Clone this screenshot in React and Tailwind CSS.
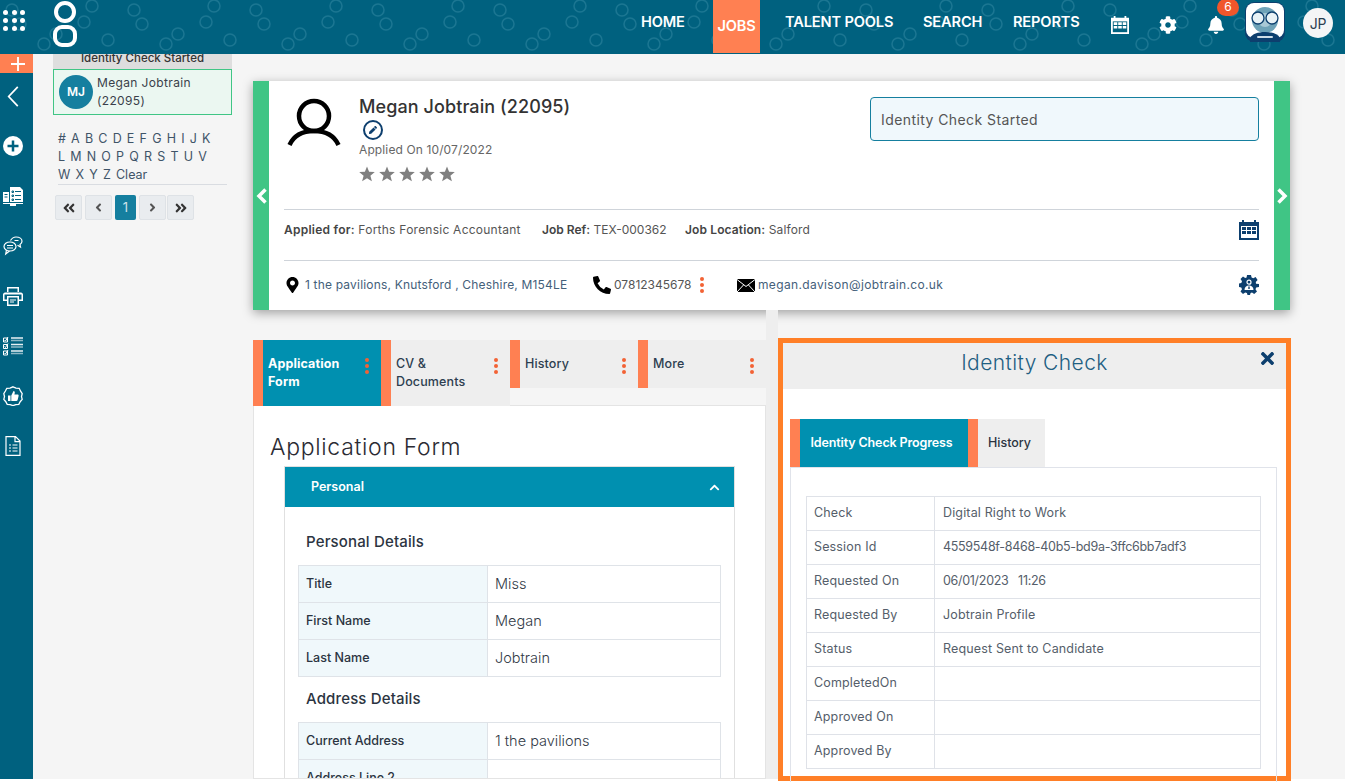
import React from "react";
import {
    FaBell,
    FaCog,
    FaTimes,
    FaChevronUp,
    FaMapMarkerAlt,
    FaPhoneAlt,
    FaPen,
    FaAngleDoubleLeft,
    FaAngleDoubleRight,
    FaAngleLeft,
    FaAngleRight,
} from "react-icons/fa";

const RingPattern = () => (
    <svg className="absolute inset-0 h-full w-full" aria-hidden="true">
        <defs>
            <pattern id="rings" width="122" height="54" patternUnits="userSpaceOnUse">
                <g fill="none" stroke="#1b7692" strokeWidth="1.5">
                    <circle cx="12" cy="10" r="6" />
                    <circle cx="20" cy="24" r="6" />
                    <circle cx="44" cy="44" r="6" />
                    <circle cx="56" cy="34" r="6" />
                    <circle cx="84" cy="22" r="6" />
                    <circle cx="92" cy="6" r="6" />
                    <circle cx="108" cy="40" r="6" />
                </g>
            </pattern>
        </defs>
        <rect width="100%" height="100%" fill="url(#rings)" />
    </svg>
);

const CalendarIcon = ({ className }) => (
    <svg viewBox="0 0 20 20" className={className} fill="currentColor">
        <path d="M0 2h3V0h2v2h10V0h2v2h3v18H0z" />
        <g fill="var(--cal-bg)">
            <path d="M2 6h16v12H2z" />
        </g>
        <path d="M3 7h4v3H3zM8 7h4v3H8zM13 7h4v3h-4zM3 11h4v3H3zM8 11h4v3H8zM13 11h4v3h-4z" />
    </svg>
);

const GearUserIcon = () => (
    <svg viewBox="0 0 20 20" className="h-[20px] w-[20px]">
        <path
            fill="#0d3f6e"
            d="M8 0h4l.6 2.6 1.7.7L16.600 2l2 3-1.800 2 .2 1.800L20 9v3l-2.800.6-.7 1.700L18 16.600l-2.800 2.400-2.200-1.600-1.400.6L11 20H8.500l-.6-2-1.700-.6L4 19l-2.500-2.400 1.500-2.300-.7-1.700L0 12V8.500l2.300-.6.7-1.700L1.500 4 4 1.600l2.200 1.500 1.400-.6z"
        />
        <circle cx="10" cy="7.200" r="2" fill="none" stroke="#fff" strokeWidth="1.200" />
        <path fill="#fff" d="M5.500 15c0-3 1.800-4.500 4.500-4.500s4.500 1.500 4.500 4.500z" />
        <path fill="#0d3f6e" d="M9.300 11.500h1.400v2.500H9.300z" />
    </svg>
);

const StarIcon = () => (
    <svg viewBox="0 0 16 16" className="h-[16px] w-[16px]" fill="#808080">
        <path d="M8 .5l2.100 5.300 5.700.3-4.400 3.600 1.500 5.600L8 12.200l-4.900 3.100 1.500-5.600L.2 6.100l5.700-.3z" />
    </svg>
);

const VerticalDots = () => (
    <span className="flex flex-col gap-[2px]">
        <span className="h-[4px] w-[4px] rounded-full bg-[#f26235]" />
        <span className="h-[4px] w-[4px] rounded-full bg-[#f26235]" />
        <span className="h-[4px] w-[4px] rounded-full bg-[#f26235]" />
    </span>
);

const sideIcons = [
    <svg key="monitor" viewBox="0 0 20 20" className="h-[20px] w-[20px]" fill="none" stroke="#fff" strokeWidth="1">
        <path fill="#fff" stroke="none" d="M0 6h6v10H0zM7 1h10l3 3v12H7z" />
        <path stroke="#00617f" d="M9 5h1.500v1.500H9zM12 5.500h6M9 9h1.500v1.500H9zM12 9.500h6M9 13h1.500v1.500H9zM12 13.500h6M1.500 8.500h3M1.500 11h3" />
        <path fill="#fff" stroke="none" d="M0 17h20v1H0zM7 18h6v2H7z" />
    </svg>,
    <svg key="chat" viewBox="0 0 20 20" className="h-[20px] w-[20px]" fill="none" stroke="#fff" strokeWidth="1.200">
        <path d="M13 1c3.500 0 6 1.800 6 4.200 0 1.400-.8 2.500-2 3.300l.5 2.500-3-1.800" />
        <path d="M7.500 4.500C9 2 11 1 13 1M11.500 4.500h4" />
        <ellipse cx="7" cy="10.500" rx="6" ry="4.500" />
        <path d="M3.500 14l-.8 4 3.800-3M4 9.500h6M4 12h6" />
    </svg>,
    <svg key="print" viewBox="0 0 20 20" className="h-[20px] w-[20px]" fill="#fff">
        <path d="M4 1h12v5h-1.500V2.500h-9V6H4z" />
        <path d="M2 6.500h16c1 0 2 1 2 2V15h-4v-1.500h2.500v-5h-17v5H4V15H0V8.500c0-1 1-2 2-2z" />
        <path d="M4 10h12v10H4zM5.500 11.500v7h9v-7z" fillRule="evenodd" />
        <path d="M7 13.500h6v1H7zM7 15.500h4v1H7z" />
    </svg>,
    <svg key="list" viewBox="0 0 20 20" className="h-[20px] w-[20px]" fill="none" stroke="#fff" strokeWidth="1">
        <path d="M.5 2h4v4h-4zM.5 8.500h4v4h-4zM.5 15h4v4h-4z" />
        <path strokeOpacity=".9" d="M8 2h12M8 8.500h12M8 15h12" strokeWidth="1.300" />
        <path strokeOpacity=".55" d="M8 4.500h12M8 11h12M8 17.500h12" strokeWidth="1.300" />
        <path d="M1.500 4l1 1 2.500-4M1.500 10.500l1 1 2.500-4M1.500 17l1 1 2.500-4" />
    </svg>,
    <svg key="thumb" viewBox="0 0 20 20" className="h-[20px] w-[20px]">
        <path
            fill="none"
            stroke="#fff"
            strokeWidth="1.300"
            d="M10 .8l3 1.300 3.200.2 1.400 2.900 1.600 2.500-.7 2.900.7 2.800-2 2.300-1.400 2.600-3 .3-2.800 1.100-2.800-1.100-3-.3-1.400-2.600-2-2.300.7-2.800-.7-2.900L2.400 5l1.400-2.700L7 2.100z"
        />
        <path fill="#fff" d="M5 9.500h2.500v5.500H5zM8.300 9.500L10.500 5c1.200 0 1.500 1 1.200 2.200l-.3 1.300h3.200c.8 0 1.200.6 1 1.400l-1 4c-.2.700-.6 1.100-1.300 1.100H8.300z" />
    </svg>,
    <svg key="doc" viewBox="0 0 20 20" className="h-[20px] w-[20px]" fill="none" stroke="#fff" strokeWidth="1.200">
        <path d="M3 .6h9.500L17 5v14.400H3zM12 .6v5h5" />
        <path strokeWidth="1.100" d="M6 9h2M9.500 9H14.500M6 12h2M9.500 12H14.500M6 15h2M9.500 15H14.500" />
    </svg>,
];

const letterRows = [
    ["#", "A", "B", "C", "D", "E", "F", "G", "H", "I", "J", "K"],
    ["L", "M", "N", "O", "P", "Q", "R", "S", "T", "U", "V"],
    ["W", "X", "Y", "Z", "Clear"],
];

const pageBtn =
    "flex h-[25px] items-center justify-center rounded-[2px] border border-[#dee2e6] bg-[#e9ecef]";

const FormTable = ({ rows }) => (
    <table className="w-[423px] table-fixed border-collapse">
        <tbody>
            {rows.map(([label, value]) => (
                <tr key={label} className="h-[37px]">
                    <td className="w-[189px] border border-[#dfe3e8] bg-[#f0f8fb] pl-[7px] text-[12.5px] font-medium text-[#2b3441]">
                        {label}
                    </td>
                    <td className="border border-[#dfe3e8] pl-[7px] text-[14.5px] font-light text-[#333b47]">
                        {value}
                    </td>
                </tr>
            ))}
        </tbody>
    </table>
);

const Tab = ({ label, active, tall, width = "w-[128px]" }) => (
    <div className={`flex ${width} border-l-[10px] border-[#ff8052] ${tall ? "h-[66px]" : "h-[48px]"} ${active ? "bg-[#0090b0] text-white font-bold" : "bg-[#eeeeee] text-[#2d3e50] font-medium"}`}>
        <div className="flex-1 pl-[5px] pt-[15px] text-[12.5px] leading-[18px] tracking-[0.01em]">{label}</div>
        <div className="pr-[12px] pt-[18px]">
            <VerticalDots />
        </div>
    </div>
);

const checkRows = [
    ["Check", "Digital Right to Work"],
    ["Session Id", "4559548f-8468-40b5-bd9a-3ffc6bb7adf3"],
    ["Requested On", "06/01/2023\u00a0\u00a0\u00a011:26"],
    ["Requested By", "Jobtrain Profile"],
    ["Status", "Request Sent to Candidate"],
    ["CompletedOn", ""],
    ["Approved On", ""],
    ["Approved By", ""],
];

export default function App() {
    return (
        <div className="h-[782px] w-[1345px] overflow-hidden bg-white font-['Inter',sans-serif] text-[#333]">
            {/* Top bar */}
            <header className="relative flex h-[54px] items-start bg-[#00617f] text-white">
                <RingPattern />
                <div className="relative grid w-[53px] shrink-0 grid-cols-3 content-start gap-x-[3px] gap-y-[3px] pl-[3px] pt-[10px] pr-[27px]">
                    {Array.from({ length: 9 }).map((_, i) => (
                        <span key={i} className="h-[5px] w-[5px] rounded-full bg-white" />
                    ))}
                </div>
                <svg viewBox="0 0 24 46" className="relative mt-[1px] h-[46px] w-[24px]" fill="none" stroke="#fff" strokeWidth="4">
                    <circle cx="12" cy="11" r="9" />
                    <rect x="2" y="26" width="20" height="18" rx="7" />
                </svg>
                <nav className="relative ml-[564px] flex h-[53px] items-center text-[14.6px] font-semibold tracking-[-0.01em]">
                    <span className="w-[72px] pb-[7px]">HOME</span>
                    <span className="flex h-[53px] w-[47px] items-center justify-center bg-[#ff8052]">JOBS</span>
                    <span className="ml-[25px] w-[138px] pb-[7px]">TALENT POOLS</span>
                    <span className="w-[90px] pb-[7px]">SEARCH</span>
                    <span className="w-[98px] pb-[7px]">REPORTS</span>
                    <span className="w-[48px] pb-[4px] [--cal-bg:#00617f]">
                        <CalendarIcon className="h-[18px] w-[18px]" />
                    </span>
                    <span className="w-[48px] pb-[4px]">
                        <FaCog className="h-[18px] w-[18px]" />
                    </span>
                    <span className="relative w-[38px] pb-[4px]">
                        <FaBell className="h-[18px] w-[18px]" />
                        <span className="absolute left-[10px] top-[-17px] flex h-[17px] w-[22px] items-center justify-center rounded-full bg-[#f0562b] text-[12px] font-normal">
                            6
                        </span>
                    </span>
                    <svg viewBox="0 0 40 40" className="mb-[10px] h-[40px] w-[40px]">
                        <rect x="0" y="0" width="40" height="40" rx="9" fill="#0d3f6e" />
                        <rect x="1" y="1" width="38" height="35" rx="8" fill="#fff" />
                        <circle cx="20" cy="18" r="13" fill="#6fa3b8" />
                        <circle cx="20" cy="18" r="7" fill="#a9c9d6" />
                        <circle cx="13" cy="16" r="6" fill="#e8f2f6" stroke="#0d3f6e" strokeWidth="1.300" />
                        <circle cx="27" cy="16" r="6" fill="#e8f2f6" stroke="#0d3f6e" strokeWidth="1.300" />
                        <path d="M5 36c2-4 8-6 15-6s13 2 15 6v4H5z" fill="#0d3f6e" />
                        <rect x="12" y="34" width="16" height="2" rx="1" fill="#cfdde6" />
                    </svg>
                    <span className="ml-[18px] mb-[7px] flex h-[30px] w-[30px] items-center justify-center rounded-full bg-[#f4f5f6] text-[14px] font-normal text-[#2d3e50]">
                        JP
                    </span>
                </nav>
            </header>

            <div className="flex h-[725px] bg-[#f5f5f5]">
                {/* Sidebar */}
                <aside className="flex w-[33px] shrink-0 flex-col bg-[#00617f] text-white">
                    <div className="flex h-[19px] items-center justify-center bg-[#ff8052] pl-[3px]">
                        <svg viewBox="0 0 15 15" className="h-[14px] w-[14px]" stroke="#fff" strokeWidth="2">
                            <path d="M7.500 0v15M0 7.500h15" />
                        </svg>
                    </div>
                    <div className="flex flex-col items-start pl-[3px]">
                        <div className="flex h-[47px] w-[20px] items-center justify-center">
                            <svg viewBox="0 0 12 22" className="h-[21px] w-[12px]" fill="none" stroke="#fff" strokeWidth="1.800">
                                <path d="M11 1L1.500 11 11 21" />
                            </svg>
                        </div>
                        <div className="flex h-[51px] w-[20px] items-center justify-center">
                            <svg viewBox="0 0 20 20" className="h-[20px] w-[20px]">
                                <circle cx="10" cy="10" r="10" fill="#fff" />
                                <path d="M10 4.500v11M4.500 10h11" stroke="#00617f" strokeWidth="2.500" />
                            </svg>
                        </div>
                        {sideIcons.map((icon) => (
                            <div key={icon.key} className="flex h-[50px] w-[20px] items-center justify-center">
                                {icon}
                            </div>
                        ))}
                    </div>
                </aside>

                {/* Candidate list */}
                <section className="ml-[20px] w-[179px] shrink-0">
                    <div className="h-[15px] bg-[#dedede] text-center text-[11.5px] font-medium leading-[8px] text-[#333]">
                        Identity Check Started
                    </div>
                    <div className="flex h-[46px] items-center gap-[4px] border border-[#40c585] bg-[#ebf7f1] pl-[5px]">
                        <span className="flex h-[34px] w-[34px] shrink-0 items-center justify-center rounded-full bg-[#157f9f] text-[12px] font-semibold text-white">
                            MJ
                        </span>
                        <span className="text-[12px] leading-[18px] tracking-[0.03em] text-[#3a3f4a]">
                            Megan Jobtrain (22095)
                        </span>
                    </div>
                    <div className="ml-[5px] mt-[15px] w-[169px] border-b border-[#d9dce1] text-[12.5px] leading-[18px] text-[#3f5468]">
                        {letterRows.map((row) => (
                            <div key={row[0]} className="flex gap-[5.2px]">
                                {row.map((l) => (
                                    <span key={l}>{l}</span>
                                ))}
                            </div>
                        ))}
                    </div>
                    <div className="ml-[2px] mt-[10px] flex gap-[3px] text-[#333]">
                        <span className={`${pageBtn} w-[27px]`}>
                            <FaAngleDoubleLeft className="h-[14px] w-[14px]" />
                        </span>
                        <span className={`${pageBtn} w-[27px]`}>
                            <FaAngleLeft className="h-[13px] w-[13px] text-[#555]" />
                        </span>
                        <span className="flex h-[25px] w-[21px] items-center justify-center rounded-[2px] bg-[#157f9f] text-[13px] text-[#cfe3ea]">
                            1
                        </span>
                        <span className={`${pageBtn} w-[27px]`}>
                            <FaAngleRight className="h-[13px] w-[13px] text-[#555]" />
                        </span>
                        <span className={`${pageBtn} -ml-[2px] w-[27px]`}>
                            <FaAngleDoubleRight className="h-[14px] w-[14px]" />
                        </span>
                    </div>
                </section>

                {/* Main */}
                <main className="ml-[21px] flex w-[1038px] shrink-0 flex-col">
                    <div className="mt-[27px] flex h-[229px] w-[1037px] shrink-0 bg-white shadow-[0_3px_10px_rgba(0,0,0,0.35)]">
                        <div className="flex w-[16px] items-center justify-center bg-[#40c585]">
                            <svg viewBox="0 0 11 16" className="h-[16px] w-[11px]" fill="none" stroke="#fff" strokeWidth="3.500">
                                <path d="M9.500 1.500L3 8l6.500 6.500" />
                            </svg>
                        </div>
                        <div className="flex flex-1 flex-col pl-[15px] pr-[15px] pt-[16px]">
                            <div className="flex h-[112px] justify-between">
                                <div className="flex">
                                    <svg viewBox="0 0 54 50" className="ml-[3px] h-[50px] w-[54px]" fill="none" stroke="#000" strokeWidth="4.500">
                                        <circle cx="27" cy="19" r="15" />
                                        <path d="M2.500 48C7 38 15 34 27 34s20 4 24.500 14" />
                                    </svg>
                                    <div className="ml-[18px]">
                                        <div className="text-[18px] font-medium leading-[20px] tracking-[0.005em] text-[#333]">
                                            Megan Jobtrain (22095)
                                        </div>
                                        <span className="ml-[4px] mt-[3px] flex h-[20px] w-[20px] items-center justify-center rounded-full border-2 border-[#0d3f6e] text-[#0d3f6e]">
                                            <FaPen className="h-[8px] w-[8px]" />
                                        </span>
                                        <div className="mt-[2px] text-[12px] leading-[16px] tracking-[0.01em] text-[#666]">
                                            Applied On 10/07/2022
                                        </div>
                                        <div className="mt-[8px] flex gap-[4px]">
                                            {[1, 2, 3, 4, 5].map((n) => (
                                                <StarIcon key={n} />
                                            ))}
                                        </div>
                                    </div>
                                </div>
                                <div className="flex h-[44px] w-[389px] items-center rounded-[4px] border border-[#157f9f] bg-[#f0f8fc] pl-[10px] text-[14px] tracking-[0.03em] text-[#555]">
                                    Identity Check Started
                                </div>
                            </div>
                            <div className="flex h-[51px] items-center border-t border-[#cfd4da] pb-[10px] text-[12px] text-[#555]">
                                <span className="w-[258px] tracking-[0.02em]">
                                    <b className="font-semibold text-[#444]">Applied for:</b> Forths Forensic Accountant
                                </span>
                                <span className="w-[143px]">
                                    <b className="font-semibold text-[#444]">Job Ref:</b> TEX-000362
                                </span>
                                <span className="tracking-[0.01em]">
                                    <b className="font-semibold text-[#444]">Job Location:</b> Salford
                                </span>
                                <span className="ml-auto text-[#0d3f6e] [--cal-bg:#fff]">
                                    <CalendarIcon className="h-[20px] w-[20px]" />
                                </span>
                            </div>
                            <div className="flex h-[49px] items-center border-t border-[#cfd4da] text-[12px] text-[#44607a]">
                                <FaMapMarkerAlt className="ml-[2px] h-[16px] w-[13px] text-black" />
                                <span className="ml-[6px] w-[288px] tracking-[0.015em]">1 the pavilions, Knutsford , Cheshire, M154LE</span>
                                <FaPhoneAlt className="h-[18px] w-[18px] text-black" />
                                <span className="ml-[3px] w-[86px] text-[#555]">07812345678</span>
                                <VerticalDots />
                                <svg viewBox="0 0 18 13" className="ml-[33px] h-[13px] w-[18px]">
                                    <rect width="18" height="13" fill="#000" />
                                    <path d="M0 .5l9 7 9-7M0 13l6.500-7M18 13l-6.500-7" fill="none" stroke="#fff" strokeWidth="1" />
                                </svg>
                                <span className="ml-[3px] tracking-[0.03em]">megan.davison@jobtrain.co.uk</span>
                                <span className="ml-auto">
                                    <GearUserIcon />
                                </span>
                            </div>
                        </div>
                        <div className="flex w-[16px] items-center justify-center bg-[#40c585]">
                            <svg viewBox="0 0 11 16" className="h-[16px] w-[11px]" fill="none" stroke="#fff" strokeWidth="3.500">
                                <path d="M1.500 1.500L8 8l-6.500 6.500" />
                            </svg>
                        </div>
                    </div>

                    <div className="flex min-h-0 flex-1">
                        {/* Application form */}
                        <div className="mt-[30px] flex w-[513px] shrink-0 flex-col overflow-hidden">
                            <div className="relative z-10 flex h-[65px] shrink-0 items-start">
                                <Tab active tall label="Application Form" />
                                <Tab tall width="w-[129px]" label="CV & Documents" />
                                <Tab label="History" />
                                <Tab label="More" />
                            </div>
                            <div className="min-h-0 flex-1 overflow-hidden border border-[#e4e4e4] bg-white">
                                <h2 className="pl-[16px] pt-[26px] text-[23px] font-light leading-[30px] tracking-[0.03em] text-[#2b2b33]">
                                    Application Form
                                </h2>
                                <div className="ml-[30px] mt-[4px] h-[400px] w-[451px] border border-[#e0e0e0]">
                                    <div className="flex h-[40px] items-center justify-between bg-[#0090b0] pl-[26px] pr-[14px] pt-[1px] text-[12.5px] font-semibold text-white">
                                        Personal
                                        <FaChevronUp className="h-[11px] w-[11px]" />
                                    </div>
                                    <div className="pl-[13px]">
                                        <h3 className="pl-[8px] pt-[25px] pb-[13px] text-[15px] font-medium leading-[20px] tracking-[0.01em] text-[#2b3441]">
                                            Personal Details
                                        </h3>
                                        <FormTable rows={[["Title", "Miss"], ["First Name", "Megan"], ["Last Name", "Jobtrain"]]} />
                                        <h3 className="pl-[8px] pt-[12px] pb-[13px] text-[15px] font-medium leading-[20px] tracking-[0.01em] text-[#2b3441]">
                                            Address Details
                                        </h3>
                                        <FormTable rows={[["Current Address", "1 the pavilions"], ["Address Line 2", ""]]} />
                                    </div>
                                </div>
                            </div>
                        </div>

                        <div className="h-[469px] w-[12px] shrink-0 bg-[#eeeeee]" />

                        {/* Identity check panel */}
                        <div className="mt-[28px] h-[443px] w-[513px] shrink-0 border-[5px] border-[#ff7f27] bg-white">
                            <div className="relative flex h-[46px] items-center justify-center bg-[#eeeeee] pb-[7px] text-[21px] font-light tracking-[0.02em] text-[#1f5f82]">
                                Identity Check
                                <FaTimes className="absolute right-[10px] top-[6px] h-[19px] w-[17px] text-[#0d3f6e]" />
                            </div>
                            <div className="pl-[7px] pt-[30px]">
                                <div className="flex h-[48px] text-[12.5px] leading-[48px]">
                                    <div className="h-[48px] w-[178px] border-l-[10px] border-[#ff8052] bg-[#0090b0] pr-[5px] text-center font-semibold tracking-[-0.01em] text-white">
                                        Identity Check Progress
                                    </div>
                                    <div className="h-[48px] w-[77px] border-l-[10px] border-[#ff8052] bg-[#eeeeee] pr-[4px] text-center font-medium text-[#2b3441]">
                                        History
                                    </div>
                                </div>
                                <div className="h-[320px] w-[487px] border border-[#e0e3ea] px-[15px] pt-[28px]">
                                    <table className="w-[455px] table-fixed border-collapse text-[12.5px] tracking-[0.012em] text-[#555e6a]">
                                        <tbody>
                                            {checkRows.map(([label, value]) => (
                                                <tr key={label} className="h-[34px]">
                                                    <td className="w-[128px] border border-[#dfe2e8] pl-[7px]">{label}</td>
                                                    <td className={`border border-[#dfe2e8] pl-[8px] ${label === "Session Id" || label === "Requested On" ? "tracking-[-0.024em]" : ""}`}>
                                                        {value}
                                                    </td>
                                                </tr>
                                            ))}
                                        </tbody>
                                    </table>
                                </div>
                            </div>
                        </div>
                    </div>
                </main>
            </div>
        </div>
    );
}
